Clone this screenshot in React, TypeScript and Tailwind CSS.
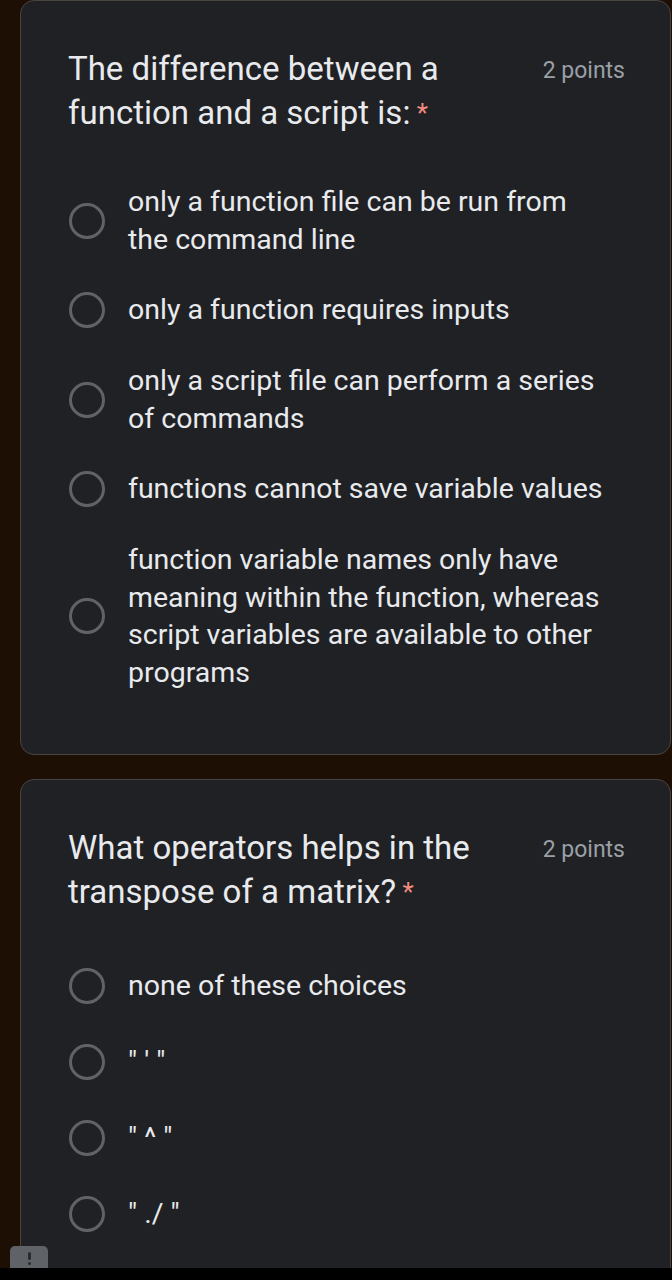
import React from 'react';

type Question = {
  title: string;
  points: string;
  options: string[];
};

const questions: Question[] = [
  {
    title: 'The difference between a function and a script is:',
    points: '2 points',
    options: [
      'only a function file can be run from the command line',
      'only a function requires inputs',
      'only a script file can perform a series of commands',
      'functions cannot save variable values',
      'function variable names only have meaning within the function, whereas script variables are available to other programs',
    ],
  },
  {
    title: 'What operators helps in the transpose of a matrix?',
    points: '2 points',
    options: ['none of these choices', '" \' "', '" ^ "', '" ./ "'],
  },
];

const Radio = () => (
  <div className="w-[36px] h-[36px] shrink-0 rounded-full border-[3px] border-[#5f6368]" />
);

const QuestionCard = ({ q, last }: { q: Question; last?: boolean }) => (
  <div
    className={`ml-5 w-[651px] shrink-0 rounded-[14px] border border-[#4a4440] bg-[#202124] pl-[47px] pr-[45px] pt-[46px] ${
      last ? 'pb-[80px]' : 'pb-[63px]'
    }`}
  >
    <div className="flex items-start gap-6">
      <div className="flex-1 text-[33px] leading-[44px] text-[#e8eaed]">
        {q.title}
        <span className="align-top text-[26px] text-[#f28b82]"> *</span>
      </div>
      <div className="pt-[2px] text-[23px] leading-[44px] text-[#9aa0a6]">{q.points}</div>
    </div>

    {/* answer choices */}
    <div className="mt-[48px] flex flex-col gap-[28px]">
      {q.options.map((opt, i) => (
        <div key={i} className="flex min-h-[48px] items-center">
          <div className="pl-[1px]">
            <Radio />
          </div>
          <div className="ml-[23px] w-[484px] text-[28.5px] leading-[37.5px] text-[#e8eaed]">{opt}</div>
        </div>
      ))}
    </div>
  </div>
);

export default function App() {
  return (
    <div
      className="relative h-[1280px] w-[672px] overflow-hidden bg-[#1e0f05]"
      style={{ fontFamily: 'Roboto, "Noto Sans", sans-serif' }}
    >
      <div className="flex flex-col gap-[24px]">
        <QuestionCard q={questions[0]} />
        <QuestionCard q={questions[1]} last />
      </div>

      {/* little floating handle at bottom left */}
      <div className="absolute left-[10px] top-[1246px] flex h-[26px] w-[38px] flex-col items-center gap-[2px] rounded-[5px] bg-[#5f6368] pt-[6px]">
        <div className="h-[8px] w-[3px] rounded-sm bg-[#2a2b2e]" />
        <div className="h-[3px] w-[3px] rounded-sm bg-[#2a2b2e]" />
      </div>

      <div className="absolute bottom-0 left-0 h-[12px] w-full bg-black" />
    </div>
  );
}
